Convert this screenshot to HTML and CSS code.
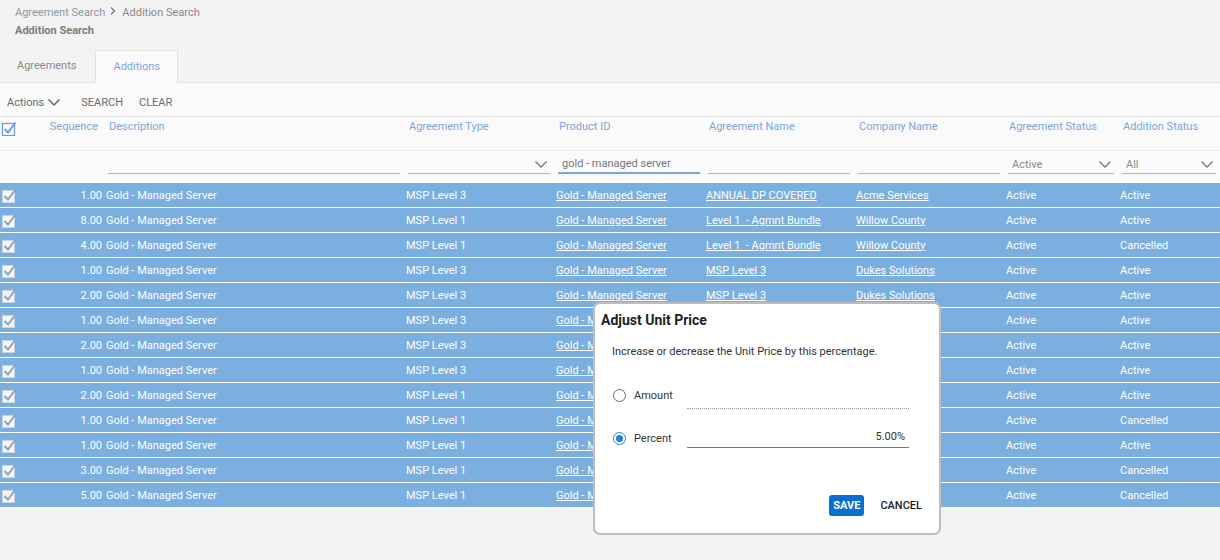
FILE: index.html
```html
<!DOCTYPE html>
<html>
<head>
<meta charset="utf-8">
<link rel="stylesheet" href="styles.css">
</head>
<body>
<div class="page">
  <div class="crumbs">
    <span class="crumb-link">Agreement Search</span>
    <svg class="crumb-sep" width="8" height="10" viewBox="0 0 8 10"><path d="M2 1.5 L5.5 5 L2 8.5" fill="none" stroke="#777" stroke-width="1.3"/></svg>
    <span class="crumb-cur">Addition Search</span>
  </div>
  <div class="title">Addition Search</div>
  <div class="tabs">
    <div class="tab">Agreements</div>
    <div class="tab active">Additions</div>
  </div>
  <div class="content">
    <div class="toolbar">
      <span class="tool actions">Actions
        <svg width="14" height="9" viewBox="0 0 14 9"><path d="M1.5 1.5 L7 7 L12.5 1.5" fill="none" stroke="#666" stroke-width="1.5"/></svg>
      </span>
      <span class="tool search">SEARCH</span>
      <span class="tool">CLEAR</span>
    </div>
    <div class="grid">
      <div class="hrow">
        <div class="hc cb"><svg class="chk" width="16" height="16" viewBox="0 0 16 16"><rect x="1.5" y="3.5" width="12" height="12" fill="#fff" stroke="#6c9fd6" stroke-width="1.3"/><path d="M3.5 9 L7 12.5 L14.5 2.5" fill="none" stroke="#6c9fd6" stroke-width="2"/></svg></div>
        <div class="hc seq">Sequence</div>
        <div class="hc">Description</div>
        <div class="hc">Agreement Type</div>
        <div class="hc">Product ID</div>
        <div class="hc">Agreement Name</div>
        <div class="hc">Company Name</div>
        <div class="hc">Agreement Status</div>
        <div class="hc">Addition Status</div>
      </div>
      <div class="frow">
        <div></div>
        <div></div>
        <div class="fc"><div class="inp"></div></div>
        <div class="fc"><div class="inp sel"><span></span><svg width="14" height="9" viewBox="0 0 14 9"><path d="M1.5 1.5 L7 7 L12.5 1.5" fill="none" stroke="#777" stroke-width="1.3"/></svg></div></div>
        <div class="fc"><div class="inp focus"><span>gold - managed server</span></div></div>
        <div class="fc"><div class="inp"></div></div>
        <div class="fc"><div class="inp"></div></div>
        <div class="fc"><div class="inp sel"><span>Active</span><svg width="14" height="9" viewBox="0 0 14 9"><path d="M1.5 1.5 L7 7 L12.5 1.5" fill="none" stroke="#777" stroke-width="1.3"/></svg></div></div>
        <div class="fc"><div class="inp sel"><span>All</span><svg width="14" height="9" viewBox="0 0 14 9"><path d="M1.5 1.5 L7 7 L12.5 1.5" fill="none" stroke="#777" stroke-width="1.3"/></svg></div></div>
      </div>
      <div id="rows"></div>
    </div>
  </div>

  <div class="dialog">
    <div class="dlg-title">Adjust Unit Price</div>
    <div class="dlg-text">Increase or decrease the Unit Price by this percentage.</div>
    <div class="opt">
      <span class="radio"></span>
      <span class="opt-label">Amount</span>
      <span class="opt-field dotted"></span>
    </div>
    <div class="opt">
      <span class="radio on"></span>
      <span class="opt-label">Percent</span>
      <span class="opt-field solid">5.00%</span>
    </div>
    <div class="dlg-actions">
      <span class="btn save">SAVE</span>
      <span class="btn cancel">CANCEL</span>
    </div>
  </div>
</div>
<script src="app.js"></script>
</body>
</html>
```

FILE: app.js
```js
const data = [
  ["1.00","MSP Level 3","ANNUAL DP COVERED","Acme Services","Active","Active"],
  ["8.00","MSP Level 1","Level 1  - Agmnt Bundle","Willow County","Active","Active"],
  ["4.00","MSP Level 1","Level 1  - Agmnt Bundle","Willow County","Active","Cancelled"],
  ["1.00","MSP Level 3","MSP Level 3","Dukes Solutions","Active","Active"],
  ["2.00","MSP Level 3","MSP Level 3","Dukes Solutions","Active","Active"],
  ["1.00","MSP Level 3","MSP Level 3","Dukes Solutions","Active","Active"],
  ["2.00","MSP Level 3","MSP Level 3","Dukes Solutions","Active","Active"],
  ["1.00","MSP Level 3","Level 1  - Agmnt Bundle","Willow County","Active","Active"],
  ["2.00","MSP Level 1","MSP Level 3","Dukes Solutions","Active","Active"],
  ["1.00","MSP Level 1","Level 1  - Agmnt Bundle","Willow County","Active","Cancelled"],
  ["1.00","MSP Level 1","MSP Level 3","Dukes Solutions","Active","Active"],
  ["3.00","MSP Level 1","MSP Level 3","Dukes Solutions","Active","Cancelled"],
  ["5.00","MSP Level 1","MSP Level 3","Dukes Solutions","Active","Cancelled"]
];
const chk = '<svg class="chk" width="16" height="16" viewBox="0 0 16 16"><rect x="1.5" y="3.5" width="12" height="12" fill="#f4f6f9" stroke="#c9d3de" stroke-width="1"/><path d="M3.5 9 L7 12.5 L14.5 2.5" fill="none" stroke="#8fa3b8" stroke-width="2"/></svg>';
const rows = document.getElementById('rows');
rows.innerHTML = data.map(d =>
  '<div class="drow">' +
  '<div class="dc cb">' + chk + '</div>' +
  '<div class="dc seq">' + d[0] + '</div>' +
  '<div class="dc">Gold - Managed Server</div>' +
  '<div class="dc">' + d[1] + '</div>' +
  '<div class="dc"><a>Gold - Managed Server</a></div>' +
  '<div class="dc"><a>' + d[2].replace(/ /g, '&nbsp;') + '</a></div>' +
  '<div class="dc"><a>' + d[3] + '</a></div>' +
  '<div class="dc">' + d[4] + '</div>' +
  '<div class="dc">' + d[5] + '</div>' +
  '</div>').join('');
```

FILE: styles.css
```css
html, body {
  margin: 0;
  padding: 0;
  background: #f3f3f3;
}
body {
  font-family: Roboto, "Liberation Sans", sans-serif;
  font-size: 11px;
  width: 1220px;
  height: 560px;
  overflow: hidden;
}
.page {
  position: relative;
  height: 560px;
  background: #f3f3f3;
}
.crumbs {
  display: flex;
  align-items: center;
  gap: 4px;
  height: 14px;
  padding: 5px 0 0 15px;
  font-size: 11px;
}
.crumb-link { color: #8b98a8; }
.crumb-cur { color: #8a8a8a; }
.crumb-sep { margin-top: -2px; margin-right: 1px; }
.title {
  padding: 5px 0 0 15px;
  height: 14px;
  font-weight: bold;
  color: #7b7b7b;
  font-size: 11px;
}
.tabs {
  display: flex;
  margin-top: 12px;
  height: 32px;
  border-bottom: 1px solid #e2e2e2;
}
.tab {
  display: flex;
  align-items: center;
  padding: 0 19px 2px 17px;
  color: #8a8a8a;
  font-size: 11px;
}
.tab.active {
  background: #fafafa;
  color: #7ea6dc;
  border: 1px solid #e2e2e2;
  border-bottom: none;
  margin-bottom: -1px;
  padding: 0 17px 2px 17px;
}
.content {
  background: #fafafa;
}
.toolbar {
  display: flex;
  align-items: center;
  height: 27px;
  padding: 6px 0 0 7px;
  border-bottom: 1px solid #e3e3e3;
  color: #6b6b6b;
  font-size: 11px;
}
.tool.actions {
  display: flex;
  align-items: center;
  gap: 3px;
  margin-right: 20px;
}
.tool.search { margin-right: 16px; }

.hrow, .frow, .drow {
  display: grid;
  grid-template-columns: 20px 84px 300px 150px 150px 150px 150px 114px 102px;
}
.hrow {
  height: 33px;
  border-bottom: 1px solid #eeeeee;
}
.hc {
  padding: 3px 0 0 5px;
  color: #7ba5da;
  font-size: 11px;
}
.hc.cb { padding: 3px 0 0 1px; }
.hc.seq { text-align: right; padding: 3px 6px 0 0; }
.frow { height: 32px; }
.fc { padding: 0 4px; }
.inp {
  margin-top: 4px;
  height: 18px;
  border-bottom: 1px solid #b5b5b5;
  display: flex;
  align-items: center;
  justify-content: space-between;
  padding: 0 2px 0 4px;
  color: #8a8a8a;
  font-size: 11px;
}
.inp.focus {
  border-bottom: 2px solid #7ba5da;
  height: 17px;
  color: #777;
}
.drow {
  height: 24px;
  background: #7aafe0;
  border-bottom: 1px solid #ffffff;
  color: #ffffff;
}
.dc {
  display: flex;
  align-items: center;
  padding-left: 2px;
  white-space: nowrap;
  overflow: hidden;
}
.dc.cb { padding-left: 1px; }
.dc.seq { justify-content: flex-end; padding: 0 2px 0 0; }
.dc a { text-decoration: underline; color: #fff; }
.chk { display: block; }

.dialog {
  position: absolute;
  left: 593px;
  top: 302px;
  width: 344px;
  height: 229px;
  background: #fff;
  border: 2px solid #bdbdbd;
  border-radius: 7px;
  display: flex;
  flex-direction: column;
}
.dlg-title {
  padding: 8px 0 0 6px;
  font-size: 14px;
  font-weight: bold;
  color: #222;
}
.dlg-text {
  padding: 17px 0 0 17px;
  font-size: 11px;
  color: #333;
}
.opt {
  display: flex;
  align-items: center;
  height: 20px;
  margin-top: 27px;
  padding-left: 18px;
}
.opt + .opt { margin-top: 23px; }
.radio {
  width: 11px;
  height: 11px;
  border: 1.5px solid #6b6b6b;
  border-radius: 50%;
  box-sizing: content-box;
}
.radio.on {
  border-color: #1a7ef0;
  position: relative;
}
.radio.on::after {
  content: "";
  position: absolute;
  left: 2px;
  top: 2px;
  width: 7px;
  height: 7px;
  border-radius: 50%;
  background: #1a7ef0;
}
.opt-label {
  margin-left: 8px;
  width: 53px;
  color: #333;
  font-size: 11px;
}
.opt-field {
  width: 222px;
  height: 18px;
  text-align: right;
  color: #333;
  padding-right: 4px;
  box-sizing: border-box;
}
.opt-field.dotted {
  border-bottom: 1px dotted #9a9a9a;
  margin-top: 10px;
}
.opt-field.solid {
  border-bottom: 1px solid #777;
  margin-top: 2px;
}
.dlg-actions {
  display: flex;
  justify-content: flex-end;
  align-items: center;
  gap: 16px;
  margin-top: 47px;
  padding-right: 17px;
}
.btn {
  font-size: 11px;
  font-weight: 500;
}
.save {
  background: #0a6fd2;
  color: #fff;
  border-radius: 3px;
  padding: 4px 4px;
  font-weight: bold;
}
.cancel {
  color: #222;
}
```
